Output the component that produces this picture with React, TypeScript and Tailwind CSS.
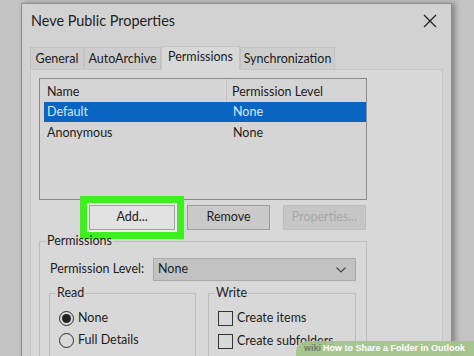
import React from 'react'

const tabs = ['General', 'AutoArchive', 'Permissions', 'Synchronization']
const tabWidths = ['w-[54px]', 'w-[77px]', 'w-[79px]', 'w-[95px]']

function Radio({ checked, label }: { checked?: boolean; label: string }) {
	return (
		<div className="flex items-center gap-[4px] h-[22px]">
			<span className="w-[15px] h-[15px] rounded-full border border-[#2b2b2b] flex items-center justify-center">
				{checked && <span className="w-[9px] h-[9px] rounded-full bg-[#222]" />}
			</span>
			<span>{label}</span>
		</div>
	)
}

function Check({ label, disabled }: { label?: string; disabled?: boolean }) {
	return (
		<div className="flex items-center gap-[4px] h-[23px]">
			<span
				className={`w-[15px] h-[15px] border ${disabled ? 'bg-[#8a8a8a] border-[#8a8a8a]' : 'border-[#333]'}`}
			/>
			{label && <span>{label}</span>}
		</div>
	)
}

export default function App() {
	return (
		<div
			className="relative w-[474px] h-[356px] overflow-hidden bg-[#c4c4c4] text-[#1c1c1c] text-[12.5px]"
			style={{ fontFamily: 'Lato, "Noto Sans", sans-serif' }}
		>
			<div className="ml-[21px] mt-[3px] w-[431px] h-[380px] bg-[#d2d2d2] border border-[#8e8e8e] shadow-[3px_0_6px_rgba(0,0,0,0.35)]">
				{/* title bar */}
				<div className="h-[34px] flex items-center justify-between pl-[9px] pr-[14px]">
					<span className="text-[14.4px] text-[#222]">Neve Public Properties</span>
					<svg width="14" height="14" viewBox="0 0 14 14" className="text-[#222]">
						<path d="M1 1 L13 13 M13 1 L1 13" stroke="currentColor" strokeWidth="1.3" />
					</svg>
				</div>

				{/* tabs */}
				<div className="mt-[7px] ml-[8px] h-[24px] flex items-end">
					{tabs.map((t, i) => {
						const active = t == 'Permissions'
						return (
							<div
								key={t}
								className={`${tabWidths[i]} flex items-center justify-center border border-b-0 ${
									active
										? 'h-[24px] bg-[#d8d8d8] border-[#c4c4c4] -mb-px relative pb-[2px]'
										: 'h-[22px] bg-[#cdcdcd] border-[#c2c2c2] pt-[2px]'
								}`}
							>
								{t}
							</div>
						)
					})}
				</div>

				{/* tab panel */}
				<div className="mx-[8px] h-[300px] bg-[#d8d8d8] border border-[#c6c6c6] pt-[8px] pl-[8px]">
					{/* list */}
					<div className="w-[328px] h-[122px] border border-[#8c8c8c] bg-[#d5d5d5]">
						<div className="h-[23px] flex items-center">
							<div className="w-[187px] h-full flex items-center pl-[7px] pt-[3px] border-r border-[#c3c3c3]">
								Name
							</div>
							<div className="pl-[5px] pt-[3px]">Permission Level</div>
						</div>
						<div className="h-[20px] ml-[4px] flex items-center pt-[1px] bg-[#0a64c2] text-[#d9e8fb]">
							<div className="w-[183px] pl-[3px]">Default</div>
							<div className="pl-[6px]">None</div>
						</div>
						<div className="h-[20px] ml-[4px] flex items-center pt-[2px]">
							<div className="w-[183px] pl-[3px]">Anonymous</div>
							<div className="pl-[6px]">None</div>
						</div>
					</div>

					{/* buttons */}
					<div className="mt-[5px] h-[25px] flex">
						<button className="ml-[50px] w-[86px] h-[25px] bg-[#e2e2e2] border border-[#a2a2a2] shadow-[0_0_0_2px_#ececec,0_0_0_9px_#3ff021]">
							Add...
						</button>
						<button className="ml-[12px] w-[83px] h-[25px] bg-[#c9c9c9] border border-[#9c9c9c]">
							Remove
						</button>
						<button className="ml-[13px] w-[83px] h-[25px] bg-[#c6c6c6] border border-[#bdbdbd] text-[#a6a6a6]">
							Properties...
						</button>
					</div>

					{/* permissions group */}
					<fieldset className="mt-[4px] w-[328px] h-[140px] border border-[#bcbcbc] px-[9px]">
						<legend className="-ml-[3px] px-[1px] leading-[14px]">Permissions</legend>
						<div className="mt-[10px] flex items-center">
							<span className="w-[104px] pl-[1px]">Permission Level:</span>
							<div className="w-[203px] h-[23px] bg-[#c2c2c2] border border-[#a9a9a9] flex items-center justify-between pl-[4px] pr-[9px]">
								<span>None</span>
								<svg width="10" height="6" viewBox="0 0 10 6">
									<path d="M0.5 0.5 L5 5 L9.5 0.5" fill="none" stroke="#444" strokeWidth="1.1" />
								</svg>
							</div>
						</div>
						<div className="mt-[5px] flex gap-[12px]">
							<fieldset className="w-[147px] h-[80px] border border-[#bcbcbc] pl-[9px]">
								<legend className="-ml-[3px] px-[1px] leading-[14px]">Read</legend>
								<div className="mt-[7px]">
									<Radio checked label="None" />
									<Radio label="Full Details" />
								</div>
							</fieldset>
							<fieldset className="w-[148px] h-[80px] border border-[#bcbcbc] pl-[9px]">
								<legend className="-ml-[3px] px-[1px] leading-[14px]">Write</legend>
								<div className="mt-[7px]">
									<Check label="Create items" />
									<Check label="Create subfolders" />
									<Check disabled />
								</div>
							</fieldset>
						</div>
					</fieldset>
				</div>
			</div>

			{/* watermark */}
			<div
				className="absolute right-0 bottom-0 h-[15px] w-[178px] bg-[#a3c489]/90 rounded-tl-[10px] flex items-center pl-[8px] font-bold text-[9px] text-white"
				style={{ fontFamily: '"Liberation Sans", Arial, sans-serif' }}
			>
				<span className="text-[#6f7f63] mr-[2px]">wiki</span>
				<span>How to Share a Folder in Outlook</span>
			</div>
		</div>
	)
}
